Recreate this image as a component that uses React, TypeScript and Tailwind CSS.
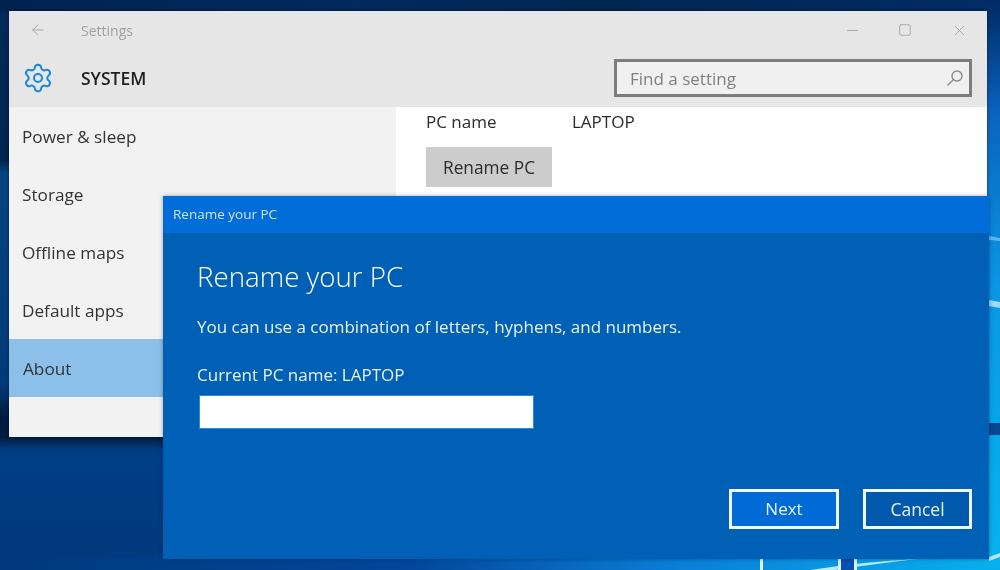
import { Minus, Settings, Square, X, ArrowLeft } from "lucide-react";

const navItems = ["Power & sleep", "Storage", "Offline maps", "Default apps", "About"];

// desktop picture behind the windows
const Wallpaper = () => (
    <svg className="absolute inset-0 h-full w-full" viewBox="0 0 1000 570" preserveAspectRatio="none">
        <defs>
            <linearGradient id="sky" x1="0" y1="0" x2="0" y2="1">
                <stop offset="0" stopColor="#01214e" />
                <stop offset="0.6" stopColor="#023068" />
                <stop offset="0.8" stopColor="#013d84" />
                <stop offset="1" stopColor="#013a7c" />
            </linearGradient>
            <linearGradient id="top" x1="0" y1="0" x2="1" y2="0">
                <stop offset="0" stopColor="#01224f" />
                <stop offset="0.35" stopColor="#012a5e" />
                <stop offset="0.6" stopColor="#01264f" />
                <stop offset="1" stopColor="#012c66" />
            </linearGradient>
            <linearGradient id="left" x1="0" y1="0" x2="0" y2="1">
                <stop offset="0" stopColor="#012a5a" />
                <stop offset="0.35" stopColor="#01254f" />
                <stop offset="0.38" stopColor="#04457f" />
                <stop offset="0.88" stopColor="#023a78" />
                <stop offset="0.95" stopColor="#011c40" />
                <stop offset="1" stopColor="#011c40" />
            </linearGradient>
            <linearGradient id="leftFade" x1="0" y1="0" x2="0" y2="1">
                <stop offset="0" stopColor="#011c40" />
                <stop offset="1" stopColor="#013a7c" />
            </linearGradient>
            <linearGradient id="edge" x1="0" y1="0" x2="0" y2="1">
                <stop offset="0" stopColor="#012a63" />
                <stop offset="0.2" stopColor="#0a63c0" />
                <stop offset="0.5" stopColor="#0a96e4" />
                <stop offset="1" stopColor="#06b4ee" />
            </linearGradient>
            <linearGradient id="floor" x1="0" y1="0" x2="1" y2="0">
                <stop offset="0" stopColor="#013a7c" />
                <stop offset="0.4" stopColor="#02459a" />
                <stop offset="0.68" stopColor="#0a7fd8" />
                <stop offset="1" stopColor="#08b0ee" />
            </linearGradient>
        </defs>
        <rect width="1000" height="570" fill="url(#sky)" />
        <rect width="1000" height="12" fill="url(#top)" />
        <rect y="12" width="9" height="425" fill="url(#left)" />
        <rect y="437" width="165" height="12" fill="url(#leftFade)" />
        <rect x="985" width="15" height="570" fill="url(#edge)" />
        <rect y="557" width="1000" height="13" fill="url(#floor)" />
        <rect x="989" y="423" width="11" height="12" fill="#06468f" />
        <path d="M989 300 L1000 302 L1000 308 L989 306Z" fill="#9fd8f2" />
        <path d="M989 236 L1000 238 L1000 241 L989 240Z" fill="#5fb8ec" />
        <path d="M989 557 L1000 553 L1000 557 L989 561Z" fill="#b5e6f7" />
        <path d="M810 570 Q860 562 918 559 L900 561 Q860 566 835 570Z" fill="#b5ecf5" />
        <rect x="760" y="559" width="3" height="11" fill="#d8f2f8" />
        <rect x="838" y="559" width="3" height="11" fill="#d8f2f8" />
        <rect x="841" y="559" width="13" height="11" fill="#0650b0" />
        <rect x="854" y="559" width="3" height="11" fill="#d8f2f8" />
    </svg>
);

const App = () => {
    return (
        <div className="relative h-[570px] w-[1000px] overflow-hidden font-['Open_Sans',sans-serif] blur-[0.4px]">
            <Wallpaper />

            {/* Settings window */}
            <div className="absolute left-[9px] top-[11px] flex h-[426px] w-[978px] flex-col bg-white shadow-[0_0_3px_rgba(0,0,0,0.5)]">
                <div className="flex h-[96px] flex-col bg-[#e6e6e6]">
                    <div className="flex h-[38px] items-center">
                        <ArrowLeft className="ml-[20px] text-[#a3a3a3]" size={18} strokeWidth={1.25} />
                        <span className="ml-[34px] text-[14px] text-[#a0a0a0]">Settings</span>
                        <div className="ml-auto flex items-center text-[#a6a6a6]">
                            <Minus size={17} strokeWidth={1.25} />
                            <Square className="ml-[37px] rounded-sm" size={14} strokeWidth={1.5} />
                            <X className="ml-[39px] mr-[19px]" size={17} strokeWidth={1.25} />
                        </div>
                    </div>
                    <div className="mt-[10px] flex items-center">
                        <Settings className="ml-[13px] text-[#1a86dc]" size={32} strokeWidth={1.5} />
                        <span className="ml-[27px] text-[17.5px] font-semibold text-[#1f1f1f]">SYSTEM</span>
                        <div className="ml-auto mr-[15px] flex h-[38px] w-[358px] items-center border-[3px] border-[#7d7d7d] bg-[#f0f0f0] pl-[13px] pr-[5px]">
                            <span className="pt-[2px] text-[17px] text-[#7f7f7f]">Find a setting</span>
                            <svg className="ml-auto" width="18" height="18" viewBox="0 0 18 18" fill="none" stroke="#8c8c8c" strokeWidth="1.4">
                                <circle cx="11" cy="7" r="5" />
                                <path d="M7.5 10.5 L1.5 16.5" />
                            </svg>
                        </div>
                    </div>
                </div>
                <div className="flex flex-1">
                    <div className="w-[387px] bg-[#f2f2f2]">
                        {navItems.map((item) => (
                            <div
                                key={item}
                                className={`flex h-[58px] items-center pt-[2px] text-[17.2px] text-[#333] ${item === "About" ? "bg-[#8cc0e8] pl-[14px]" : "pl-[13px]"}`}
                            >
                                {item}
                            </div>
                        ))}
                    </div>
                    <div className="flex-1 pl-[30px] pt-[1px]">
                        <div className="flex h-[28px] items-center text-[17px] text-[#2b2b2b]">
                            <span className="w-[146px]">PC name</span>
                            <span>LAPTOP</span>
                        </div>
                        <button className="mt-[11px] h-[40px] w-[126px] bg-[#cccccc] pt-[2px] text-[17.3px] text-[#2b2b2b]">Rename PC</button>
                    </div>
                </div>
            </div>

            {/* Rename dialog */}
            <div className="absolute left-[163px] top-[196px] flex h-[363px] w-[826px] flex-col bg-[#0060b6] text-[#e8f2fb] shadow-[0_0_4px_rgba(0,0,0,0.35)]">
                <div className="flex h-[37px] items-center bg-[#006dd9] pl-[10px] text-[13.5px] text-[#cfe3f7]">Rename your PC</div>
                <div className="flex flex-1 flex-col pl-[34px] pr-[17px]">
                    <h1 className="mt-[23px] text-[27.7px] font-light leading-[40px] text-white">Rename your PC</h1>
                    <p className="mt-[19px] text-[17px] leading-[24px]">You can use a combination of letters, hyphens, and numbers.</p>
                    <p className="mt-[24px] text-[17px] leading-[24px]">Current PC name: LAPTOP</p>
                    <input className="ml-[2px] mt-[8px] h-[34px] w-[335px] border border-[#2a8ae6] bg-white outline-none" readOnly />
                    <div className="mb-[30px] mt-auto flex justify-end gap-[24px]">
                        <button className="h-[40px] w-[110px] border-[3px] border-[#f2f7fc] bg-[#006bd6] text-[17px]">Next</button>
                        <button className="h-[40px] w-[109px] border-[3px] border-[#f2f7fc] bg-[#0059ad] text-[17.5px]">Cancel</button>
                    </div>
                </div>
            </div>
        </div>
    );
};

export default App;
